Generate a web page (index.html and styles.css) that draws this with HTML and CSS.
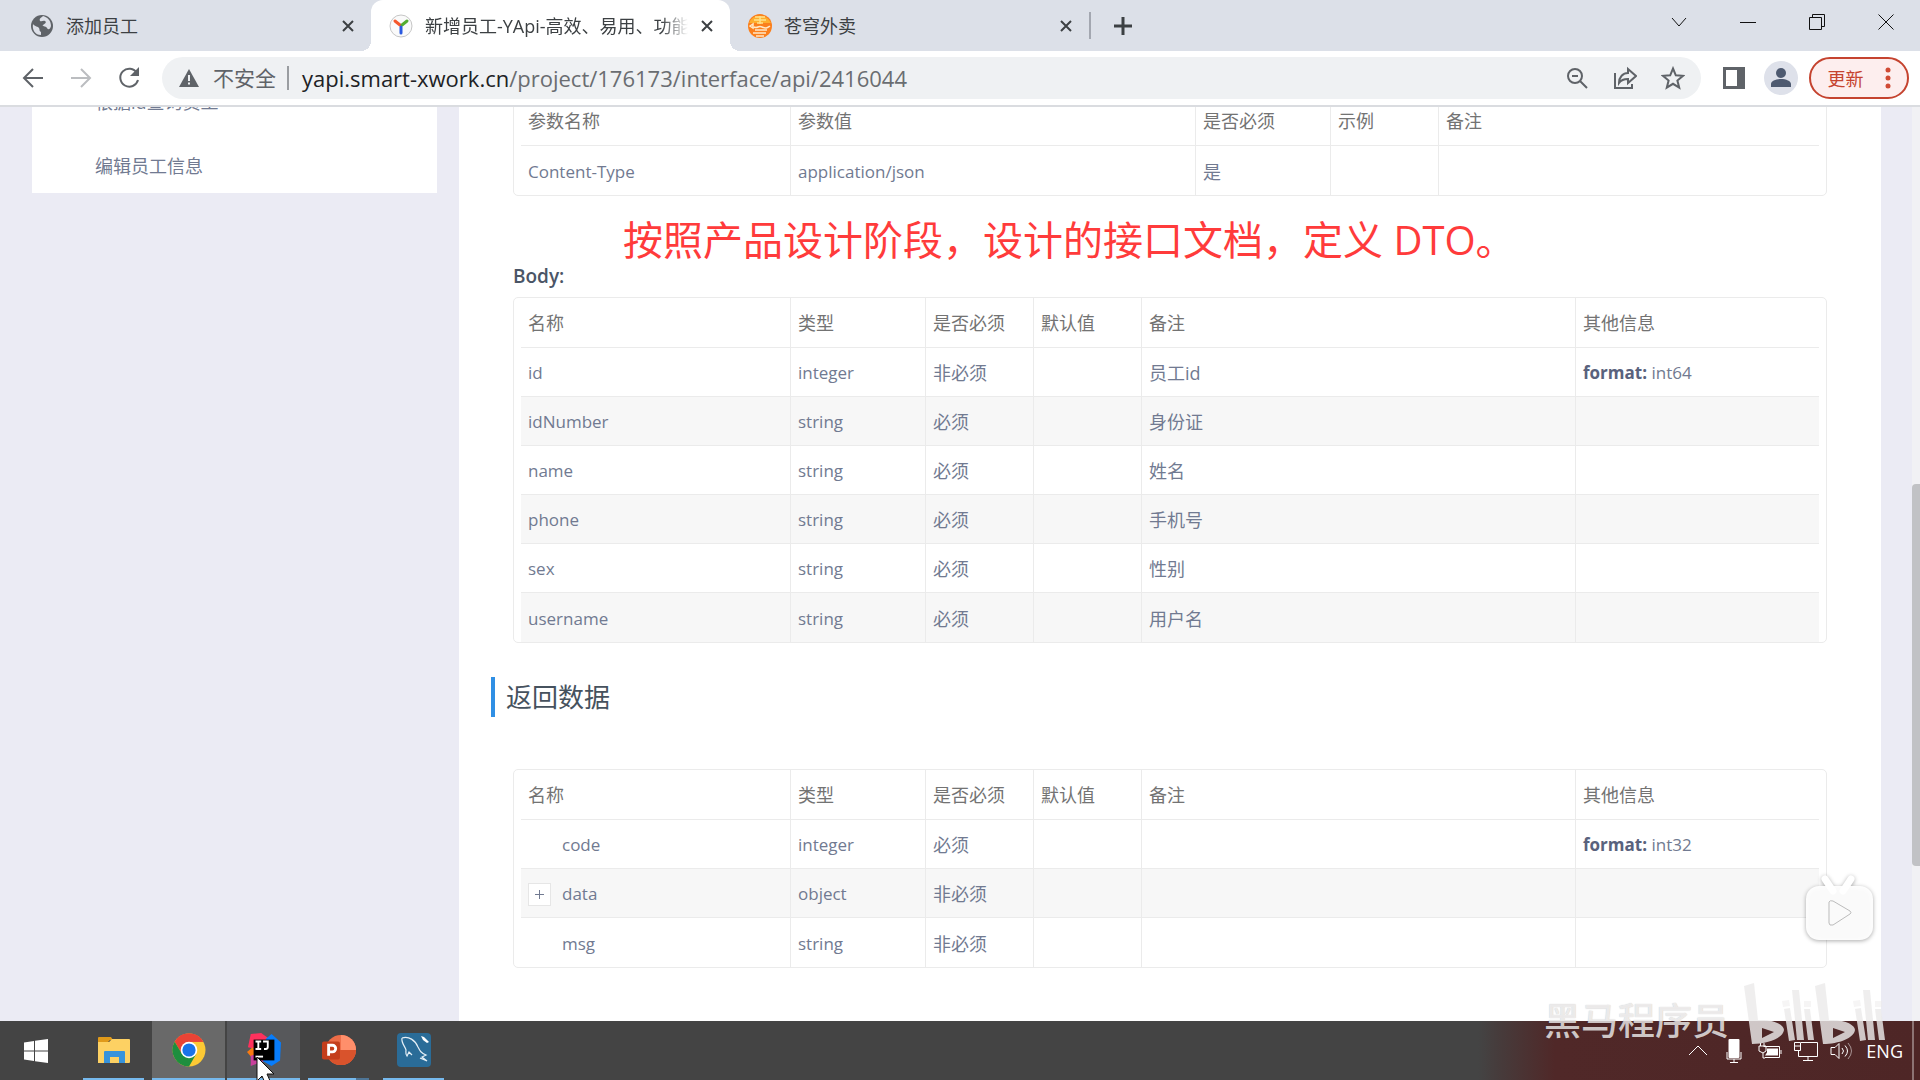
FILE: index.html
```html
<!DOCTYPE html>
<html lang="zh-CN">
<head>
<meta charset="utf-8">
<title>新增员工-YApi</title>
<link rel="stylesheet" href="styles.css">
</head>
<body>
<header class="browser">
  <nav class="tabs" aria-label="标签页">
    <div class="tab">
      <svg class="favicon" viewBox="0 0 24 24"><circle cx="12" cy="12" r="11" fill="#5f6368"/><path d="M3 10c2 3 5 2 6 4s0 3 2 4v3C5 21 2 16 3 10zM13 2c-2 2-4 2-3 5 2 1 3-1 5 0s0 3-2 4 3 1 4 3 3 2 4-2c0-6-4-9-8-10z" fill="#dde0e8"/></svg>
      <span class="tab-title">添加员工</span>
      <button class="tab-close" aria-label="关闭"><svg viewBox="0 0 14 14"><path d="M2 2l10 10M12 2L2 12"/></svg></button>
    </div>
    <div class="tab tab-active">
      <svg class="favicon" viewBox="0 0 24 24"><circle cx="12" cy="12" r="11" fill="#fafafa" stroke="#c6c6c6"/><path d="M6 7l5 4" stroke="#f4572c" stroke-width="3" stroke-linecap="round"/><path d="M18 7l-5 4" stroke="#54ad2f" stroke-width="3" stroke-linecap="round"/><path d="M12 13v6" stroke="#2b5ae0" stroke-width="3" stroke-linecap="round"/></svg>
      <span class="tab-title">新增员工-YApi-高效、易用、功能</span>
      <button class="tab-close" aria-label="关闭"><svg viewBox="0 0 14 14"><path d="M2 2l10 10M12 2L2 12"/></svg></button>
    </div>
    <div class="tab">
      <svg class="favicon" viewBox="0 0 24 24"><circle cx="12" cy="12" r="12" fill="#fb7f1c"/><path d="M1 9a12 12 0 0 1 22 0z" fill="#fdae2e"/><path d="M7 3h10M6 6h12M9 9h6M12 2v8" stroke="#ffe28a" stroke-width="1.500"/><path d="M2 12l3-2v4zM6 13c4 2 4-2 8 0s5 1 8-1M7 16h12M5 19h13M8 22h8" stroke="#ffe9c8" stroke-width="1.500" fill="none"/></svg>
      <span class="tab-title">苍穹外卖</span>
      <button class="tab-close" aria-label="关闭"><svg viewBox="0 0 14 14"><path d="M2 2l10 10M12 2L2 12"/></svg></button>
    </div>
    <button class="new-tab" aria-label="新标签页"><svg viewBox="0 0 18 18"><path d="M9 0v18M0 9h18"/></svg></button>
    <div class="window-controls">
      <button aria-label="搜索标签页"><svg viewBox="0 0 16 16"><path d="M1 4l7 8 7-8"/></svg></button>
      <button aria-label="最小化"><svg viewBox="0 0 16 16"><path d="M0 8.500h16"/></svg></button>
      <button aria-label="还原"><svg viewBox="0 0 16 16"><path d="M.5 3.500h12v12H.5zM3.500 3.500v-3h12v12h-3"/></svg></button>
      <button aria-label="关闭窗口"><svg viewBox="0 0 16 16"><path d="M.5.5l15 15M15.500.5l-15 15"/></svg></button>
    </div>
  </nav>
  <div class="toolbar">
    <button class="nav-button" aria-label="后退"><svg viewBox="0 0 24 24"><path d="M22 12H3M12 3l-9 9 9 9"/></svg></button>
    <button class="nav-button nav-disabled" aria-label="前进"><svg viewBox="0 0 24 24"><path d="M2 12h19M12 3l9 9-9 9"/></svg></button>
    <button class="nav-button nav-reload" aria-label="刷新"><svg viewBox="0 0 24 24"><path d="M20 7a9 9 0 1 0 1 7"/><path d="M22 1v9h-9z" fill="#5f6368" stroke="none"/></svg></button>
    <div class="omnibox">
      <svg class="warning" viewBox="0 0 20 18"><path d="M10 0l10 18H0z" fill="#5f6368"/><path d="M10 6v6M10 13.500v2" stroke="#eff1f3" stroke-width="2"/></svg>
      <span class="insecure">不安全</span>
      <span class="url"><b>yapi.smart-xwork.cn</b>/project/176173/interface/api/2416044</span>
      <button aria-label="缩放"><svg viewBox="0 0 24 24"><circle cx="10" cy="10" r="7"/><path d="M15 15l7 7M7 10h6"/></svg></button>
      <button aria-label="分享"><svg viewBox="0 0 24 24"><path d="M2 7v15h17v-4"/><path d="M15 3l8 7-8 7v-4c-5 0-7 1-9 4 0-6 4-10 9-10z"/></svg></button>
      <button aria-label="收藏"><svg viewBox="0 0 24 24"><path d="M12 2.500l2.800 6.800 7.200.5-5.600 4.700 1.800 7.200L12 17.800l-6.200 3.900 1.800-7.200L2 9.800l7.200-.5z"/></svg></button>
    </div>
    <button class="side-panel" aria-label="侧边栏"><svg viewBox="0 0 22 22"><path d="M0 0h22v22H0zM3 3v16h11V3z" fill="#5f6368" fill-rule="evenodd"/></svg></button>
    <button class="avatar" aria-label="个人资料"><svg viewBox="0 0 34 34"><circle cx="17" cy="17" r="17" fill="#dee1ea"/><circle cx="17" cy="12" r="5" fill="#4e5a70"/><path d="M7 26v-3c0-3 5-5 10-5s10 2 10 5v3z" fill="#4e5a70"/></svg></button>
    <button class="update">更新<svg viewBox="0 0 6 22"><circle cx="3" cy="3" r="2.500"/><circle cx="3" cy="11" r="2.500"/><circle cx="3" cy="19" r="2.500"/></svg></button>
  </div>
</header>

<main class="viewport">
  <div class="page">
    <aside class="sidebar">
      <a href="#byid">根据id查询员工</a>
      <a href="#edit">编辑员工信息</a>
    </aside>
    <section class="panel">
      <div class="table-frame">
        <table class="params">
          <colgroup><col class="c-name"><col class="c-value"><col class="c-type"><col class="c-small"><col></colgroup>
          <tr><th>参数名称</th><th>参数值</th><th>是否必须</th><th>示例</th><th>备注</th></tr>
          <tr><td>Content-Type</td><td>application/json</td><td>是</td><td></td><td></td></tr>
        </table>
      </div>
      <p class="annotation">按照产品设计阶段，设计的接口文档，定义 DTO。</p>
      <h3>Body:</h3>
      <div class="table-frame">
        <table>
          <colgroup><col class="c-name"><col class="c-type"><col class="c-small"><col class="c-small"><col><col class="c-other"></colgroup>
          <tr><th>名称</th><th>类型</th><th>是否必须</th><th>默认值</th><th>备注</th><th>其他信息</th></tr>
          <tr><td>id</td><td>integer</td><td>非必须</td><td></td><td>员工id</td><td><b>format:</b> int64</td></tr>
          <tr class="striped"><td>idNumber</td><td>string</td><td>必须</td><td></td><td>身份证</td><td></td></tr>
          <tr><td>name</td><td>string</td><td>必须</td><td></td><td>姓名</td><td></td></tr>
          <tr class="striped"><td>phone</td><td>string</td><td>必须</td><td></td><td>手机号</td><td></td></tr>
          <tr><td>sex</td><td>string</td><td>必须</td><td></td><td>性别</td><td></td></tr>
          <tr class="striped"><td>username</td><td>string</td><td>必须</td><td></td><td>用户名</td><td></td></tr>
        </table>
      </div>
      <h2>返回数据</h2>
      <div class="table-frame">
        <table class="tree">
          <colgroup><col class="c-name"><col class="c-type"><col class="c-small"><col class="c-small"><col><col class="c-other"></colgroup>
          <tr><th>名称</th><th>类型</th><th>是否必须</th><th>默认值</th><th>备注</th><th>其他信息</th></tr>
          <tr><td><span class="leaf">code</span></td><td>integer</td><td>必须</td><td></td><td></td><td><b>format:</b> int32</td></tr>
          <tr class="striped"><td><span class="branch"><button class="expand" aria-label="展开"><svg viewBox="0 0 9 9"><path d="M4.500 0v9M0 4.500h9"/></svg></button>data</span></td><td>object</td><td>非必须</td><td></td><td></td><td></td></tr>
          <tr><td><span class="leaf">msg</span></td><td>string</td><td>非必须</td><td></td><td></td><td></td></tr>
        </table>
      </div>
    </section>
  </div>
  <div class="scrollbar"><div class="thumb"></div></div>
</main>

<footer class="taskbar">
  <button class="task start" aria-label="开始"><svg viewBox="0 0 24 24"><path d="M0 3.500l10-1.500v9.500H0zM11 1.800L24 0v11.500H11zM0 12.500h10V22L0 20.500zM11 12.500h13V24l-13-1.800z" fill="#fff"/></svg></button>
  <button class="task" aria-label="文件资源管理器"><svg viewBox="0 0 34 34"><path d="M1 5q0-1 1-1h12l2 3h-3l-3 3H1z" fill="#e09a1a"/><path d="M1 9h11l3-3h17q1 0 1 1v22q0 1-1 1H1z" fill="#fdd163"/><path d="M7 30V19q0-1 1-1h19q1 0 1 1v11h-6v-6h-9v6z" fill="#3793db"/></svg></button>
  <button class="task task-active" aria-label="Chrome"><svg viewBox="0 0 34 34"><circle cx="17" cy="17" r="16.500" fill="#fcc934"/><path d="M17 17L2.700 8.700A16.500 16.500 0 0 1 31.300 8.700H17z" fill="#ea4335"/><path d="M17 8.700h14.300A16.500 16.500 0 0 0 2.700 8.700L10 21z" fill="#ea4335"/><path d="M2.700 8.700A16.500 16.500 0 0 0 17 33.500l7.200-12.400L17 25 10 21z" fill="#1e8e3e"/><circle cx="17" cy="17" r="8.300" fill="#fff"/><circle cx="17" cy="17" r="6.600" fill="#1a73e8"/></svg></button>
  <button class="task task-hover" aria-label="IntelliJ IDEA"><svg viewBox="0 0 36 36"><path d="M4 1l11-1 7 5-4 14-17-4z" fill="#fe315d"/><path d="M0 20l6-5 6 8-7 3z" fill="#f97a12"/><path d="M4 24l10-3 6 8-16 6z" fill="#c9419c"/><path d="M20 6l6-5 10 9-1 19-9 6-9-5z" fill="#087cfa"/><path d="M7 7h22v22H7z" fill="#000"/><path d="M9 9h6M12 9v8M9 17h6M17 9h5v6q0 2-4 2" stroke="#fff" stroke-width="2" fill="none"/><path d="M9 25h8" stroke="#fff" stroke-width="2"/></svg></button>
  <button class="task task-stack" aria-label="PowerPoint"><svg viewBox="0 0 36 34"><circle cx="20" cy="17" r="16" fill="#ed6c47"/><path d="M20 1a16 16 0 0 1 16 16H20z" fill="#ff8f6b"/><path d="M4 17h32a16 16 0 0 1-32 0z" fill="#d9532c"/><rect y="8" width="19" height="19" rx="2" fill="#c43e1c"/><path d="M7 23V12h4a3 3 0 0 1 0 7H7" stroke="#fff" stroke-width="3" fill="none"/></svg></button>
  <button class="task" aria-label="MySQL Workbench"><svg viewBox="0 0 34 34"><rect width="34" height="34" rx="4" fill="#2a6c98"/><path d="M5 5c7-2 13 2 16 9 2 4 3 6 8 8l-4 2 5 4-7-3M5 5c-1 5 3 8 4 12 0 2-1 3 1 6l2-4 3 3" stroke="#e6f0f7" stroke-width="1.200" fill="none"/><path d="M24 3l3 1 5 5-2 1-4-3z" fill="#fff"/></svg></button>
  <div class="tray">
    <svg viewBox="0 0 24 24"><path d="M3 16l9-9 9 9"/></svg>
    <svg viewBox="0 0 24 24"><rect x="6.500" y="0" width="11" height="19" rx="1" fill="#fff" stroke="none"/><path d="M5 13v7h14v-7M12 20v3M8 23.500h8"/></svg>
    <svg viewBox="0 0 24 24"><path d="M5.500 7.500h16v11H7M23 11v4M1 7h7v5l-3 2-4-2zM2.500 4v3M6 4v3M5 14v5h2"/><path d="M9 9.500h11v7H7l2-3z" fill="#fff" stroke="none"/></svg>
    <svg viewBox="0 0 24 24"><path d="M7 3.500h16.500v14H4.500V12M.5 3.500h6v8h-6zM.5 7h6M14 17v4M9 21.500h10"/></svg>
    <svg viewBox="0 0 24 24"><path d="M1 8.500h4l4-4v15l-4-4H1zM12 9q3 3 0 6M15 6.500q5 5.500 0 11"/><path d="M18 4q7 8 0 16" opacity=".5"/></svg>
    <span>ENG</span>
  </div>
</footer>

<svg class="player-badge" viewBox="0 0 72 72"><path d="M22 6l8 12M48 6l-8 12" stroke="#fff" stroke-width="7" stroke-linecap="round"/><rect x="3" y="13" width="67" height="54" rx="13" fill="#fff" fill-opacity=".94"/><path class="play" d="M26 29q1-2 4-1l17 10q2 2 0 3L30 52q-4 1-4-2z"/></svg>
<div class="watermark">
  <span>黑马程序员</span>
  <svg viewBox="0 0 142 62"><g id="bili"><path d="M0 3L10 0 14 37C30 36 40 42 40 47 39 55 24 61 8 61zM18 45v10l12-6z" fill-rule="evenodd"/><path d="M40 26l6-1 5 32-6 1zM48 7l7 0 5 50-7 0zM60 26h6l4 31h-6z"/><path d="M38 18l7-1 1 6-7 1zM60 18h7v6h-7z" opacity=".6"/></g><use href="#bili" x="71"/></svg>
</div>
<svg class="cursor" viewBox="0 0 20 30"><path d="M1 1v24l5-5 4 9 5-2-4-9h7z" fill="#fff" stroke="#111"/></svg>
</body>
</html>
```
FILE: styles.css
```css
* { box-sizing: border-box; }
body {
  margin: 0;
  height: 100vh;
  display: flex;
  flex-direction: column;
  overflow: hidden;
  position: relative;
  font-family: "Open Sans", "Noto Sans CJK SC", sans-serif;
  font-size: 17px;
  color: #717a91;
  background: #ebebf4;
}
button { border: 0; padding: 0; background: none; font: inherit; color: inherit; display: flex; align-items: center; justify-content: center; }
svg { display: block; fill: none; }

/* Tab strip */
.tabs { display: flex; height: 51px; background: #dce0e8; }
.tab { flex: 0 1 359px; display: flex; align-items: center; gap: 12px; padding: 0 16px 0 18px; color: #3c4043; min-width: 0; }
.tab:first-child { flex-basis: 371px; padding-left: 30px; }
.tab-active { position: relative; background: #fff; border-radius: 12px 12px 0 0; }
.tab-active::before, .tab-active::after { content: ""; position: absolute; bottom: 0; width: 10px; height: 10px; }
.tab-active::before { right: 100%; background: radial-gradient(circle at 0 0, transparent 10px, #fff 10px); }
.tab-active::after { left: 100%; background: radial-gradient(circle at 100% 0, transparent 10px, #fff 10px); }
.favicon { width: 24px; height: 24px; flex: none; }
.tab-title { flex: 1; min-width: 0; overflow: hidden; white-space: nowrap; font-size: 18px; line-height: 28px; }
.tab-active .tab-title { mask-image: linear-gradient(to right, #000 90%, transparent); }
.tab-close svg { width: 14px; height: 14px; stroke: #3c4043; stroke-width: 2; }
.new-tab { width: 66px; margin: 12px 0; border-left: 2px solid #a3a7b0; }
.new-tab svg { width: 18px; height: 18px; stroke: #3c4043; stroke-width: 3; }
.window-controls { margin-left: auto; display: flex; height: 43px; }
.window-controls button { width: 69px; }
.window-controls svg { width: 16px; height: 16px; stroke: #111; }

/* Address bar */
.toolbar { display: flex; align-items: center; height: 56px; padding: 0 11px 0 21px; background: #fff; border-bottom: 2px solid #dadce0; }
.nav-button { width: 48px; justify-content: flex-start; }
.nav-reload { width: 45px; }
.nav-button svg { width: 24px; height: 24px; stroke: #5f6368; stroke-width: 2; }
.nav-disabled svg { stroke: #bbbdc0; }
.omnibox { flex: 1; display: flex; align-items: center; height: 42px; margin-right: 22px; padding: 0 16px 0 17px; border-radius: 21px; background: #eff1f3; }
.warning { width: 20px; height: 18px; }
.insecure { margin-left: 14px; padding-right: 11px; border-right: 2px solid #9a9da1; font-size: 21px; line-height: 24px; color: #5f6368; }
.url { flex: 1; margin-left: 13px; font-size: 22px; color: #6a6d71; }
.url b { font-weight: 400; color: #202124; }
.omnibox button { margin-left: 24px; }
.omnibox button svg { width: 24px; height: 24px; stroke: #5f6368; stroke-width: 2; }
.side-panel svg { width: 22px; height: 22px; }
.avatar { margin: 0 11px 0 19px; }
.avatar svg { width: 34px; height: 34px; }
.update { gap: 21px; width: 100px; height: 42px; border: 2px solid #c5432f; border-radius: 21px; background: #fdeeee; color: #c5432f; font-size: 18px; }
.update svg { width: 6px; height: 22px; fill: #d04a34; }

/* Page content, scrolled part of the way down */
.viewport { flex: 1; min-height: 0; display: flex; overflow: hidden; }
.page { flex: 1; display: flex; align-items: flex-start; gap: 22px; margin-top: -32px; padding: 0 31px 0 32px; }
.sidebar { flex: none; width: 405px; background: #fff; }
.sidebar a { display: block; margin-bottom: 10px; padding-left: 63px; font-size: 18px; line-height: 54px; color: #717a91; text-decoration: none; }
.sidebar a:last-child { margin-bottom: 0; }
.panel { flex: 1; min-width: 0; padding: 20px 54px 80px; background: #fff; }
.table-frame { padding: 0 7px; border: 1px solid #ebebeb; border-radius: 5px; }
table { width: 100%; table-layout: fixed; border-collapse: separate; border-spacing: 0; }
th, td { height: 49px; padding: 0 7px; text-align: left; font-weight: 400; line-height: 24px; border-bottom: 1px solid #ebebeb; border-right: 1px solid #ebebeb; }
th { height: 50px; font-size: 18px; color: #737373; }
td { padding-top: 2px; }
td:nth-child(3), td:nth-child(5) { font-size: 18px; }
th:last-child, td:last-child { border-right: 0; }
tr:last-child td { border-bottom: 0; }
.striped { background: #f7f7f7; }
.c-name { width: 270px; }
.c-value { width: 405px; }
.c-type { width: 135px; }
.c-small { width: 108px; }
.c-other { width: 243px; }
td b { color: #59627d; }
.annotation { margin: 20px 0 0 110px; font-size: 40px; line-height: 48px; color: #ff3b3b; white-space: nowrap; }
h3 { margin: 0 0 9px; font-size: 19px; line-height: 24px; font-weight: 600; color: #4a5566; }
h2 { margin: 34px 0 52px -22px; padding-left: 11px; border-left: 4px solid #2f8fe4; font-size: 26px; line-height: 40px; font-weight: 400; color: #46525e; }
.leaf { padding-left: 34px; }
.branch { display: flex; align-items: center; gap: 11px; }
.expand { width: 23px; height: 23px; border: 1px solid #e6e6e6; background: #fff; }
.expand svg { width: 9px; height: 9px; stroke: #717a91; }
.scrollbar { width: 8px; padding-top: 377px; background: #f1f1f4; }
.thumb { height: 382px; border-radius: 4px 0 0 4px; background: #c1c2c5; }

/* Desktop taskbar */
.taskbar { display: flex; height: 59px; background: linear-gradient(to right, #444 77%, #463c3c 78%, #502828 81%, #4e2626); }
.task { width: 61px; margin: 0 7px; border-bottom: 2px solid #76b9ed; }
.task svg { width: 34px; height: 34px; }
.start { width: 72px; margin: 0 4px 0 0; border: 0; }
.start svg { width: 24px; height: 24px; }
.task-active { width: 73px; margin: 0 1px; background: #696969; }
.task-hover { width: 73px; margin: 0 1px; background: #57585b; }
.task-stack { border-image: linear-gradient(to right, #76b9ed 77%, #4e7596 77%) 1; }
.tray { display: flex; align-items: center; gap: 12px; margin: 0 6px 0 auto; padding-right: 9px; border-right: 2px solid #8d7474; color: #fff; font-size: 18px; }
.tray svg { width: 24px; height: 24px; stroke: #fff; stroke-width: 1; }

/* Overlays */
.player-badge { position: absolute; right: 45px; bottom: 135px; width: 72px; height: 72px; filter: drop-shadow(0 1px 2px rgba(0, 0, 0, .35)); }
.play { fill: #fafafa; stroke: #bbb; stroke-width: 1; }
.watermark { position: absolute; right: 34px; bottom: 35px; display: flex; align-items: flex-end; gap: 15px; color: rgba(248, 246, 246, .78); }
.watermark span { font-size: 37px; line-height: 48px; font-weight: 500; text-shadow: 0 0 1px rgba(0, 0, 0, .25); }
.watermark svg { width: 142px; height: 62px; fill: rgba(236, 234, 234, .82); }
.cursor { position: absolute; left: 256px; bottom: -6px; width: 20px; height: 30px; }
```
